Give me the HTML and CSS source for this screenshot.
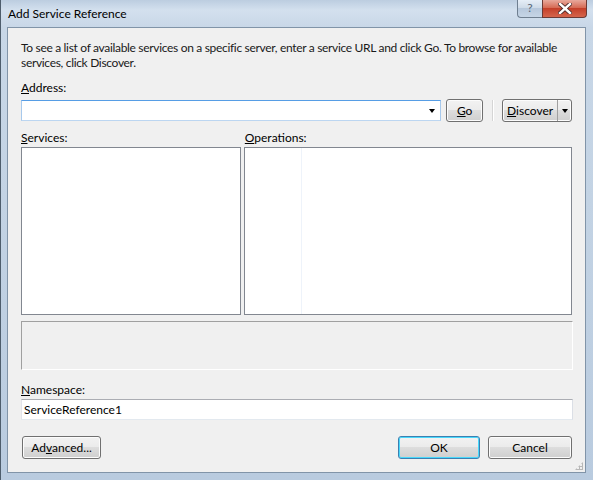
FILE: index.html
```html
<!DOCTYPE html>
<html>
<head>
  <title>Add Service Reference</title>
  <link rel="stylesheet" href="styles.css">
</head>
<body>
  <div class="window">
    <div class="titlebar">
      <span class="title">Add Service Reference</span>
      <div class="caption-btns">
        <div class="cap-help">?</div>
        <div class="cap-close">
          <svg width="14" height="11" viewBox="0 0 14 11">
            <path d="M2 1 L12 10 M12 1 L2 10" stroke="#4a2a2a" stroke-width="4.2" stroke-linecap="square"/>
            <path d="M2 1 L12 10 M12 1 L2 10" stroke="#fff" stroke-width="2.4" stroke-linecap="square"/>
          </svg>
        </div>
      </div>
    </div>

    <div class="client">
      <p class="intro">To see a list of available services on a specific server, enter a service URL and click Go. To browse for available services, click Discover.</p>

      <div class="label"><u>A</u>ddress:</div>
      <div class="address-row">
        <div class="combo focused">
          <span class="arrow"></span>
        </div>
        <button class="btn go"><u>G</u>o</button>
        <div class="sep"></div>
        <div class="btn split">
          <span class="split-main"><u>D</u>iscover</span>
          <span class="split-arrow"><span class="arrow"></span></span>
        </div>
      </div>

      <div class="lists-labels">
        <div class="label services-col"><u>S</u>ervices:</div>
        <div class="label ops-col"><u>O</u>perations:</div>
      </div>
      <div class="lists">
        <div class="listbox services-col"></div>
        <div class="listbox ops-col"><div class="ops-divider"></div></div>
      </div>

      <div class="status"></div>

      <div class="label ns-label"><u>N</u>amespace:</div>
      <div class="textbox">ServiceReference1</div>

      <div class="bottom-row">
        <button class="btn advanced">Ad<u>v</u>anced...</button>
        <div class="spacer"></div>
        <button class="btn ok">OK</button>
        <button class="btn cancel">Cancel</button>
      </div>
      <div class="grip"></div>
    </div>
  </div>
</body>
</html>
```
FILE: styles.css
```css
body { margin: 0; font-family: Lato, "Noto Sans", sans-serif; font-size: 12px; color: #000; background: #c6d5e5; }
.window { width: 593px; height: 480px; box-sizing: border-box; display: flex; flex-direction: column; border-left: 1px solid #4e5d6c; background: linear-gradient(180deg, #bccde0 0px, #d3e0ee 10px, #c8d7e7 28px, #c3d3e4 200px, #b9cbdf 480px); overflow: hidden; }
.titlebar { height: 27px; display: flex; justify-content: space-between; align-items: flex-start; }
.title { padding: 6px 0 0 7px; line-height: 15px; color: #000; }
.caption-btns { display: flex; margin-right: 6px; }
.cap-help { width: 25px; height: 18px; box-sizing: border-box; border: 1px solid #6f7f90; border-top: none; border-right: none; border-radius: 0 0 0 4px; background: linear-gradient(180deg, #e6eef7 0%, #cfdbe8 45%, #b7c8dc 50%, #c6d5e6 100%); color: #556677; font-size: 12px; text-align: center; line-height: 16px; }
.cap-close { width: 45px; height: 18px; box-sizing: border-box; border: 1px solid #6b3a35; border-top: none; border-radius: 0 0 4px 0; background: linear-gradient(180deg, #e8a99c 0%, #d66b55 45%, #c4402a 50%, #d5654c 100%); display: flex; align-items: center; justify-content: center; }

.client { margin: 0 7px 7px 6px; flex: 1; border: 1px solid #8194a8; background: #f0f0f0; padding: 13px 13px 0 13px; position: relative; }
.intro { margin: 0; line-height: 14.5px; color: #1a1a1a; letter-spacing: -0.32px; }
.label { line-height: 15px; }
.intro + .label { margin-top: 10px; }

.address-row { display: flex; align-items: center; margin-top: 4px; height: 23px; }
.combo { width: 421px; height: 21px; box-sizing: border-box; background: #fff; border: 1px solid #abadb3; border-color: #abadb3 #dbdfe6 #e3e9ef #e2e3ea; position: relative; }
.combo.focused { border-color: #569de5 #a7c9ec #bcd6f1 #a7c9ec; }
.combo .arrow { position: absolute; right: 5px; top: 8px; }
.arrow { display: block; width: 0; height: 0; border-left: 3.5px solid transparent; border-right: 3.5px solid transparent; border-top: 4px solid #000; }

.btn { font-family: inherit; font-size: 12px; color: #000; box-sizing: border-box; height: 23px; padding: 0; border: 1px solid #707070; border-radius: 3px; background: linear-gradient(180deg, #f2f2f2 0%, #ebebeb 50%, #dddddd 50%, #cfcfcf 100%); box-shadow: inset 0 0 0 1px #fcfcfc; }
.go { width: 37px; margin-left: 5px; }
.sep { width: 1px; height: 21px; background: #d5d5d5; border-right: 1px solid #fff; margin: 0 8px 0 9px; }
.split { width: 70px; display: flex; align-items: stretch; }
.split-main { flex: 1; display: flex; align-items: center; justify-content: center; }
.split-arrow { width: 13px; border-left: 1px solid #a0a0a0; display: flex; align-items: center; justify-content: center; }

.lists-labels { display: flex; margin-top: 8px; }
.lists { display: flex; margin-top: 2px; }
.services-col { width: 220px; }
.ops-col { width: 329px; margin-left: 3px; }
.lists-labels .ops-col { padding-left: 2px; }
.listbox { height: 168px; box-sizing: border-box; background: #fff; border: 1px solid #828790; position: relative; }
.ops-divider { position: absolute; left: 56px; top: 0; bottom: 0; width: 1px; background: #eef3fa; }

.status { height: 49px; box-sizing: border-box; margin-top: 6px; border: 1px solid #a0a0a0; border-right-color: #fff; border-bottom-color: #fff; width: 552px; }
.ns-label { margin-top: 12px; }
.textbox { width: 552px; height: 21px; box-sizing: border-box; margin-top: 2px; background: #fff; border: 1px solid; border-color: #abadb3 #dbdfe6 #e3e9ef #e2e3ea; padding-left: 2px; line-height: 19px; }

.bottom-row { display: flex; margin-top: 16px; width: 551px; }
.advanced { width: 79px; margin-left: 1px; }
.spacer { flex: 1; }
.ok { width: 82px; border-color: #3c7fb1; box-shadow: inset 0 0 0 1px #48d8fb; }
.cancel { width: 84px; margin-left: 8px; }
.grip { position: absolute; right: 2px; bottom: 2px; width: 8px; height: 8px; background: radial-gradient(circle, #b8b8b8 1px, transparent 1.2px) 0 0 / 3px 3px; clip-path: polygon(100% 0, 100% 100%, 0 100%); }
```
